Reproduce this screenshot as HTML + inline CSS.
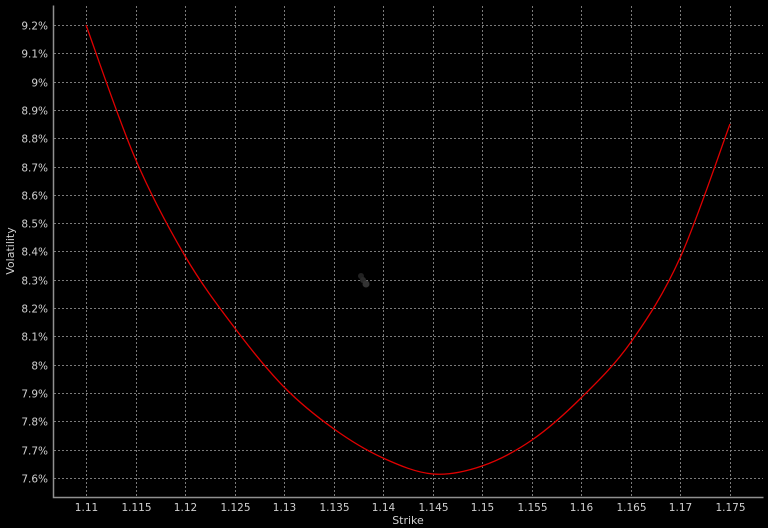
<!DOCTYPE html>
<html><head><style>
html,body{margin:0;padding:0;background:#000;width:768px;height:528px;overflow:hidden}
svg{display:block}
text{font-family:"DejaVu Sans","Liberation Sans",sans-serif;font-size:10.5px;fill:#d0d0d0}
</style></head><body>
<svg width="768" height="528" xmlns="http://www.w3.org/2000/svg" id="s">
<rect x="0" y="0" width="768" height="528" fill="#000"/>
<g id="grid" stroke="#7a7a7a" stroke-width="1" stroke-dasharray="2,2"></g>
<path d="M53.5 5.5 V497.5 H763.5" fill="none" stroke="#909090" stroke-width="1.5"/>
<g id="lab"></g>
<text x="14" y="251" text-anchor="middle" transform="rotate(-90 14 251)" style="font-size:11px">Volatility</text>
<text x="408" y="524" text-anchor="middle" style="font-size:11px">Strike</text>
<circle cx="361" cy="276" r="3" fill="#222"/>
<circle cx="363" cy="280" r="3" fill="#2a2a2a"/>
<circle cx="366" cy="284" r="3.5" fill="#333"/>
<path id="curve" fill="none" stroke="#e00000" stroke-width="1.3"/>
</svg>
<script>
var g=document.getElementById('grid'),l=document.getElementById('lab'),ns='http://www.w3.org/2000/svg';
function el(p,t,a){var e=document.createElementNS(ns,t);for(var k in a)e.setAttribute(k,a[k]);p.appendChild(e);return e}
var xs=['1.11','1.115','1.12','1.125','1.13','1.135','1.14','1.145','1.15','1.155','1.16','1.165','1.17','1.175'];
for(var i=0;i<14;i++){var x=Math.round(86+i*49.54)+0.5;el(g,'line',{x1:x,x2:x,y1:6,y2:497});var t=el(l,'text',{x:x,y:511,'text-anchor':'middle'});t.textContent=xs[i];}
var ys=['9.2%','9.1%','9%','8.9%','8.8%','8.7%','8.6%','8.5%','8.4%','8.3%','8.2%','8.1%','8%','7.9%','7.8%','7.7%','7.6%'];
for(var j=0;j<17;j++){var y=Math.round(25+j*28.31)+0.5;el(g,'line',{x1:54,x2:763,y1:y,y2:y});var t=el(l,'text',{x:48,y:y+4,'text-anchor':'end'});t.textContent=ys[j];}
var P=[[86,25],[135,158],[185,256],[234,327],[284,387],[334,429],[383,458],[433,474],[482,466],[532,440],[581,398],[631,342],[680,258],[730,124]];
var d='M'+P[0][0]+' '+P[0][1];
for(var i=0;i<P.length-1;i++){var p0=P[i-1]||P[i],p1=P[i],p2=P[i+1],p3=P[i+2]||p2;
d+=' C'+(p1[0]+(p2[0]-p0[0])/6)+' '+(p1[1]+(p2[1]-p0[1])/6)+' '+(p2[0]-(p3[0]-p1[0])/6)+' '+(p2[1]-(p3[1]-p1[1])/6)+' '+p2[0]+' '+p2[1];}
document.getElementById('curve').setAttribute('d',d);
</script>
</body></html>
